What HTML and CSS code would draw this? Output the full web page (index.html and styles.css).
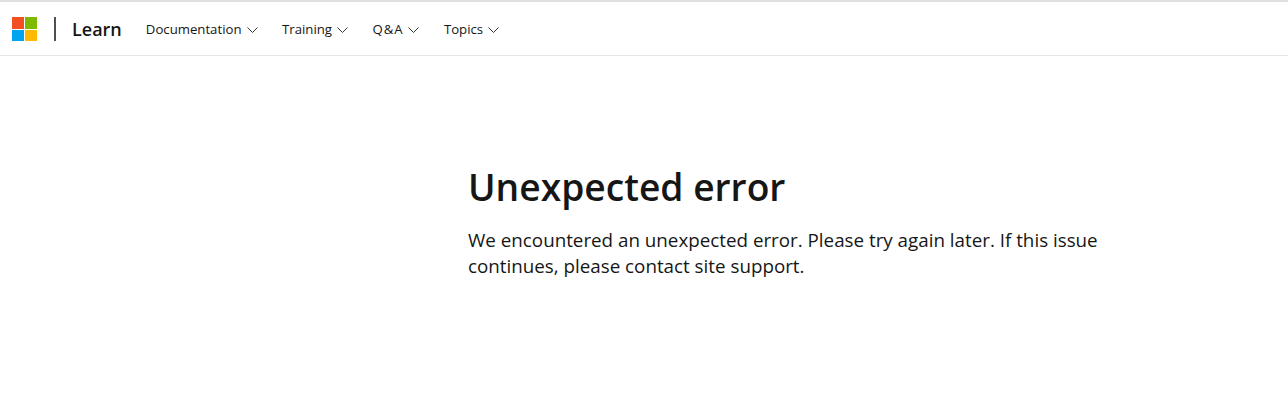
FILE: index.html
```html
<!DOCTYPE html>
<html lang="en">
<head>
<meta charset="utf-8">
<title>Unexpected error</title>
<link rel="stylesheet" href="styles.css">
</head>
<body>
<header class="header">
  <svg class="logo" viewBox="0 0 25 24" width="25" height="24" aria-label="Microsoft">
    <rect x="0" y="0" width="12" height="12" fill="#f25022"/>
    <rect x="13" y="0" width="12" height="12" fill="#7fba00"/>
    <rect x="0" y="13" width="12" height="11" fill="#00a4ef"/>
    <rect x="13" y="13" width="12" height="11" fill="#ffb900"/>
  </svg>
  <span class="divider"></span>
  <a class="brand">Learn</a>
  <nav class="nav">
    <a class="nav-item">Documentation <svg class="chev" viewBox="0 0 11 6" width="11" height="6"><path d="M.5.5l5 5 5-5" fill="none" stroke="#333" stroke-width="1"/></svg></a>
    <a class="nav-item">Training <svg class="chev" viewBox="0 0 11 6" width="11" height="6"><path d="M.5.5l5 5 5-5" fill="none" stroke="#333" stroke-width="1"/></svg></a>
    <a class="nav-item nav-item-wide">Q&amp;A <svg class="chev" viewBox="0 0 11 6" width="11" height="6"><path d="M.5.5l5 5 5-5" fill="none" stroke="#333" stroke-width="1"/></svg></a>
    <a class="nav-item">Topics <svg class="chev" viewBox="0 0 11 6" width="11" height="6"><path d="M.5.5l5 5 5-5" fill="none" stroke="#333" stroke-width="1"/></svg></a>
  </nav>
</header>
<main class="main">
  <h1 class="title">Unexpected error</h1>
  <p class="message">We encountered an unexpected error. Please try again later. If this issue continues, please contact site support.</p>
</main>
</body>
</html>
```
FILE: styles.css
```css
* { box-sizing: border-box; }
html, body { margin: 0; padding: 0; background: #fff; }
body { font-family: "Open Sans", "Noto Sans", sans-serif; color: #161616; }
.header {
  display: flex;
  align-items: center;
  height: 56px;
  border-top: 2px solid #e0e0e0;
  border-bottom: 1px solid #e6e6e6;
  padding-left: 12px;
}
.logo { flex: none; }
.divider { width: 2px; height: 24px; background: #505050; margin-left: 17px; }
.brand { margin-left: 16px; font-size: 18px; font-weight: 600; color: #161616; }
.nav { display: flex; margin-left: 24px; gap: 24.5px; }
.nav-item { display: flex; align-items: center; gap: 5px; font-size: 13.2px; color: #161616; }
.nav-item-wide { letter-spacing: 0.9px; }
.chev { margin-top: 2px; }
.main { padding: 107px 0 0 468px; width: 1110px; }
.title { margin: 0; font-size: 37.2px; line-height: 48px; font-weight: 600; color: #161616; }
.message { margin: 16px 0 0; font-size: 18.8px; line-height: 26px; color: #161616; }
```
